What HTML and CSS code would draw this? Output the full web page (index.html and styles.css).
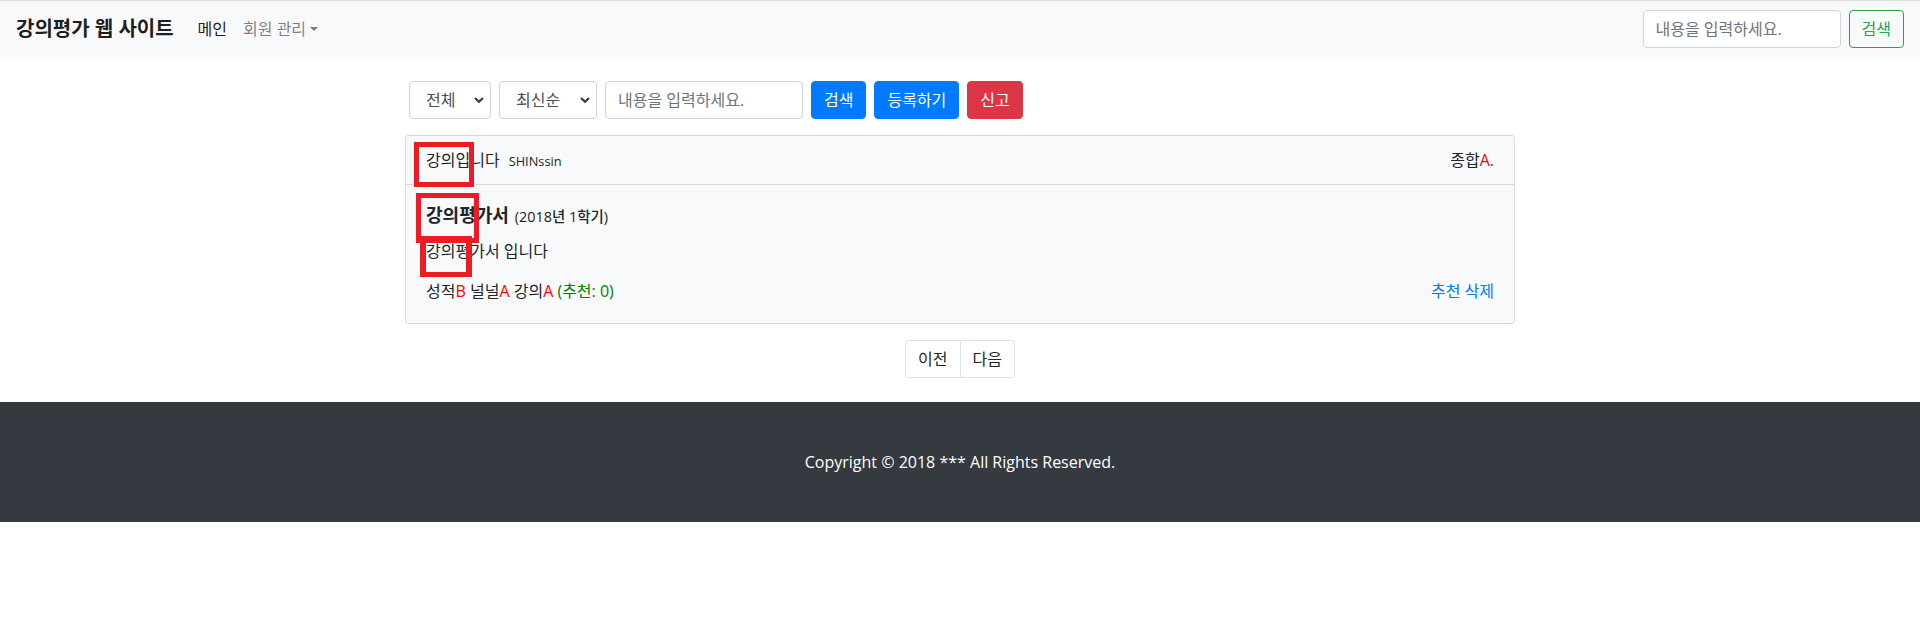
FILE: index.html
```html
<!DOCTYPE html>
<html lang="ko">
<head>
<meta charset="utf-8">
<title>강의평가 웹 사이트</title>
<link rel="stylesheet" href="styles.css">
</head>
<body>
<nav class="navbar">
  <a class="brand" href="#">강의평가 웹 사이트</a>
  <ul class="nav">
    <li><a class="nav-link active" href="#">메인</a></li>
    <li><a class="nav-link dropdown-toggle" href="#">회원 관리</a></li>
  </ul>
  <form class="nav-search">
    <input class="form-control search-input" type="search" placeholder="내용을 입력하세요.">
    <button class="btn btn-outline-success" type="submit">검색</button>
  </form>
</nav>

<section class="container">
  <form class="filter-form">
    <span class="select-wrap sel-divide">
      <select class="form-control">
        <option>전체</option>
        <option>전공</option>
        <option>교양</option>
        <option>기타</option>
      </select>
      <svg class="chev" viewBox="0 0 10 6" aria-hidden="true"><path d="M1 1L5 4.8L9 1" /></svg>
    </span>
    <span class="select-wrap sel-order">
      <select class="form-control">
        <option>최신순</option>
        <option>추천순</option>
      </select>
      <svg class="chev" viewBox="0 0 10 6" aria-hidden="true"><path d="M1 1L5 4.8L9 1" /></svg>
    </span>
    <input class="form-control search-input" type="text" placeholder="내용을 입력하세요.">
    <button class="btn btn-primary" type="submit">검색</button>
    <a class="btn btn-primary" href="#">등록하기</a>
    <a class="btn btn-danger" href="#">신고</a>
  </form>

  <div class="card">
    <div class="card-header">
      <div class="card-left"><span class="mark mark-1">강의</span>입니다<small class="prof">SHINssin</small></div>
      <div class="card-right">종합<span class="red">A.</span></div>
    </div>
    <div class="card-body">
      <h5 class="card-title"><span class="mark mark-2">강의</span>평가서<small class="semester">(2018년 1학기)</small></h5>
      <p class="card-text"><span class="mark mark-3">강의</span>평가서 입니다</p>
      <div class="card-row">
        <div>성적<span class="red">B</span> 널널<span class="red">A</span> 강의<span class="red">A</span> <span class="green">(추천: 0)</span></div>
        <div class="actions"><a href="#">추천</a> <a href="#">삭제</a></div>
      </div>
    </div>
  </div>

  <ul class="pagination">
    <li><a class="page-link page-first" href="#">이전</a></li>
    <li><a class="page-link page-last" href="#">다음</a></li>
  </ul>
</section>

<footer class="footer">Copyright &copy; 2018 *** All Rights Reserved.</footer>
</body>
</html>
```

FILE: styles.css
```css
* {
  box-sizing: border-box;
}

html,
body {
  margin: 0;
}

body {
  font-family: "Open Sans", "Noto Sans CJK KR", sans-serif;
  font-size: 16px;
  font-weight: 400;
  line-height: 1.5;
  color: #212529;
  background: #fff;
}

a {
  text-decoration: none;
}

/* ---------- navbar ---------- */
.navbar {
  display: flex;
  align-items: center;
  padding: 8px 16px;
  background: #f8f9fa;
  border-top: 1px solid #dcdfe2;
}

.brand {
  font-size: 20px;
  font-weight: 700;
  line-height: 30px;
  padding: 5px 0;
  margin-right: 16px;
  color: rgba(0, 0, 0, 0.9);
}

.nav {
  display: flex;
  list-style: none;
  margin: 0 auto 0 0;
  padding: 0;
}

.nav-link {
  display: block;
  padding: 8px;
  font-weight: 400;
  color: rgba(0, 0, 0, 0.5);
}

.nav-link.active {
  color: rgba(0, 0, 0, 0.9);
}

.dropdown-toggle::after {
  content: "";
  display: inline-block;
  margin-left: 0.255em;
  vertical-align: 0.255em;
  border-top: 0.3em solid;
  border-right: 0.3em solid transparent;
  border-left: 0.3em solid transparent;
  border-bottom: 0;
}

.nav-search {
  display: flex;
  align-items: center;
  margin: 0;
}

.nav-search .search-input {
  margin-right: 8px;
}

/* ---------- form controls ---------- */
.form-control {
  display: block;
  height: 38px;
  padding: 6px 12px;
  font: inherit;
  font-size: 16px;
  line-height: 1.5;
  color: #495057;
  background: #fff;
  border: 1px solid #ced4da;
  border-radius: 4px;
}

.form-control::placeholder {
  color: #6c757d;
  opacity: 1;
}

.search-input {
  width: 198px;
}

.btn {
  display: inline-block;
  height: 38px;
  padding: 6px 12px;
  font: inherit;
  font-size: 16px;
  line-height: 1.5;
  text-align: center;
  border: 1px solid transparent;
  border-radius: 4px;
  cursor: pointer;
}

.btn-outline-success {
  color: #28a745;
  border-color: #28a745;
  background: transparent;
}

.btn-primary {
  color: #fff;
  background: #007bff;
  border-color: #007bff;
}

.btn-danger {
  color: #fff;
  background: #dc3545;
  border-color: #dc3545;
}

/* ---------- main ---------- */
.container {
  width: 1140px;
  margin: 0 auto;
  padding: 0 15px;
}

.filter-form {
  display: flex;
  align-items: center;
  margin-top: 16px;
}

.filter-form > * {
  margin: 8px 4px 0;
}

.select-wrap {
  position: relative;
  display: block;
}

.select-wrap select {
  width: 100%;
  appearance: none;
  -webkit-appearance: none;
  padding-left: 16px;
  padding-right: 24px;
}

.sel-divide {
  width: 82px;
}

.sel-order {
  width: 98px;
}

.chev {
  position: absolute;
  right: 7px;
  top: 16px;
  width: 10px;
  height: 6px;
  pointer-events: none;
}

.chev path {
  fill: none;
  stroke: #3c3c3c;
  stroke-width: 2.2;
}

/* ---------- card ---------- */
.card {
  margin-top: 16px;
  background: #f8f9fa;
  border: 1px solid rgba(0, 0, 0, 0.125);
  border-radius: 4px;
}

.card-header {
  display: flex;
  justify-content: space-between;
  padding: 12px 20px;
  background: #f8f9fa;
  border-bottom: 1px solid rgba(0, 0, 0, 0.125);
  border-radius: 3px 3px 0 0;
}

.prof {
  font-size: 80%;
  margin-left: 9px;
}

.card-body {
  padding: 20px;
}

.card-title {
  margin: 0 0 12px;
  font-size: 18px;
  line-height: 1.2;
  font-weight: 700;
}

.semester {
  font-size: 80%;
  font-weight: 500;
  margin-left: 6px;
}

.card-text {
  margin: 0 0 16px;
}

.card-row {
  display: flex;
  justify-content: space-between;
}

.actions a {
  color: #007bff;
}

.red {
  color: #ff0000;
}

.green {
  color: #008000;
}

/* red annotation boxes */
.mark {
  position: relative;
  display: inline-block;
}

.mark::after {
  content: "";
  position: absolute;
  border: 5px solid #ed1c24;
  pointer-events: none;
}

.mark-1::after {
  left: -12px;
  top: -6px;
  width: 50px;
  height: 35px;
}

.mark-2::after {
  left: -10px;
  top: -12px;
  width: 53px;
  height: 40px;
}

.mark-3::after {
  left: -6px;
  top: -3px;
  width: 40px;
  height: 31px;
  border-width: 5px 6px;
}

/* ---------- pagination ---------- */
.pagination {
  display: flex;
  justify-content: center;
  list-style: none;
  margin: 16px 0;
  padding: 0;
}

.page-link {
  display: block;
  padding: 8px 12px;
  line-height: 1.25;
  font-weight: 400;
  color: #212529;
  background: #fff;
  border: 1px solid #dee2e6;
}

.page-first {
  border-radius: 4px 0 0 4px;
}

.page-last {
  margin-left: -1px;
  border-radius: 0 4px 4px 0;
}

/* ---------- footer ---------- */
.footer {
  margin-top: 24px;
  padding: 48px;
  text-align: center;
  color: #fff;
  background: #343a40;
}
```
